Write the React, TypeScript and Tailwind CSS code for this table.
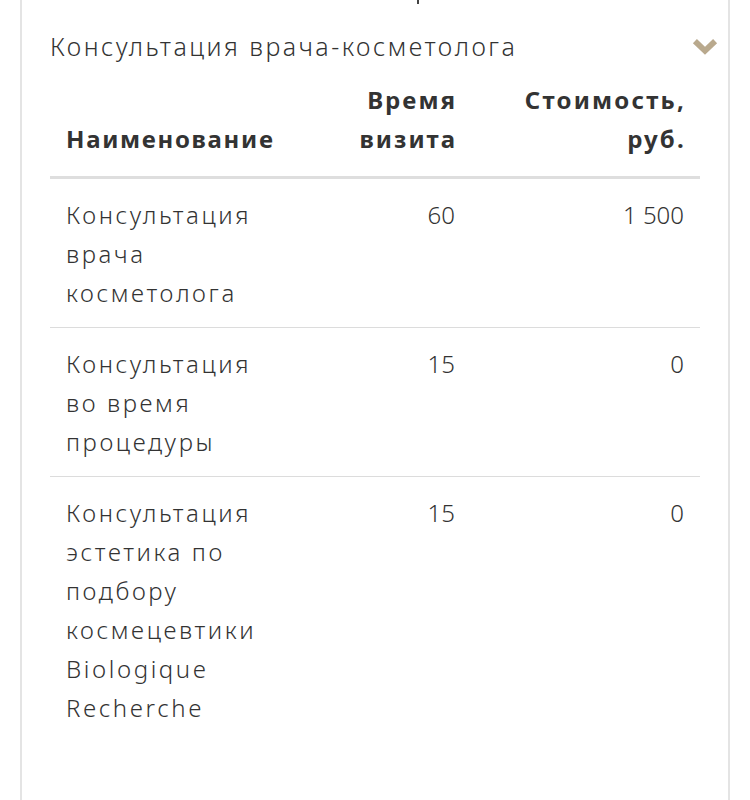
import React from 'react';

const rows = [
  { name: 'Консультация врача косметолога', time: '60', price: '1 500' },
  { name: 'Консультация во время процедуры', time: '15', price: '0' },
  { name: 'Консультация эстетика по подбору космецевтики Biologique Recherche', time: '15', price: '0' },
];

const ChevronDown: React.FC<{ className?: string }> = ({ className }) => (
  <svg viewBox="0 0 24 16" fill="none" stroke="currentColor" strokeWidth="5.5" className={className}>
    <path d="M2.5 3l9.5 9 9.5-9" />
  </svg>
);

const App: React.FC = () => {
  return (
    <div className="min-h-[800px] bg-white px-[20px] font-['Noto_Sans',sans-serif] text-[#333]">
      <div className="min-h-[800px] border-x-2 border-[#e4e4e4]">
        <div className="h-[4px]">
          <div className="ml-[395px] h-[4px] w-[2px] bg-[#444]" />
        </div>
        <div className="flex items-center justify-between pl-[28px] pr-[10px] pt-[23px]">
          <h2 className="text-[25px] font-light leading-[38px] tracking-[2.5px]">Консультация врача-косметолога</h2>
          <ChevronDown className="h-[17px] w-[26px] text-[#b9a98d]" />
        </div>
        <div className="pl-[28px] pr-[28px] pt-[15px]">
          <table className="w-[650px] table-fixed border-collapse text-[24px] leading-[39px]">
            <colgroup>
              <col className="w-[240px]" />
              <col className="w-[181px]" />
              <col className="w-[229px]" />
            </colgroup>
            <thead>
              <tr className="border-b-[3px] border-[#dedede]">
                <th className="px-[16px] pb-[18px] pt-0 text-left align-bottom font-bold tracking-[1.7px]">Наименование</th>
                <th className="pl-[16px] pr-[14px] pb-[18px] pt-0 text-right align-bottom font-bold tracking-[2px]">Время визита</th>
                <th className="pl-[16px] pr-[14px] pb-[18px] pt-0 text-right align-bottom font-bold tracking-[2.2px]">Стоимость, руб.</th>
              </tr>
            </thead>
            <tbody>
              {rows.map((r, i) => (
                <tr key={i} className={i < rows.length - 1 ? 'border-b border-[#dcdcdc]' : ''}>
                  <td className="px-[16px] pb-[15px] pt-[16px] align-top font-light tracking-[2.6px]">{r.name}</td>
                  <td className="px-[16px] pb-[15px] pt-[16px] text-right align-top font-light">{r.time}</td>
                  <td className="px-[16px] pb-[15px] pt-[16px] text-right align-top font-light">{r.price}</td>
                </tr>
              ))}
            </tbody>
          </table>
        </div>
      </div>
    </div>
  );
};

export default App;
